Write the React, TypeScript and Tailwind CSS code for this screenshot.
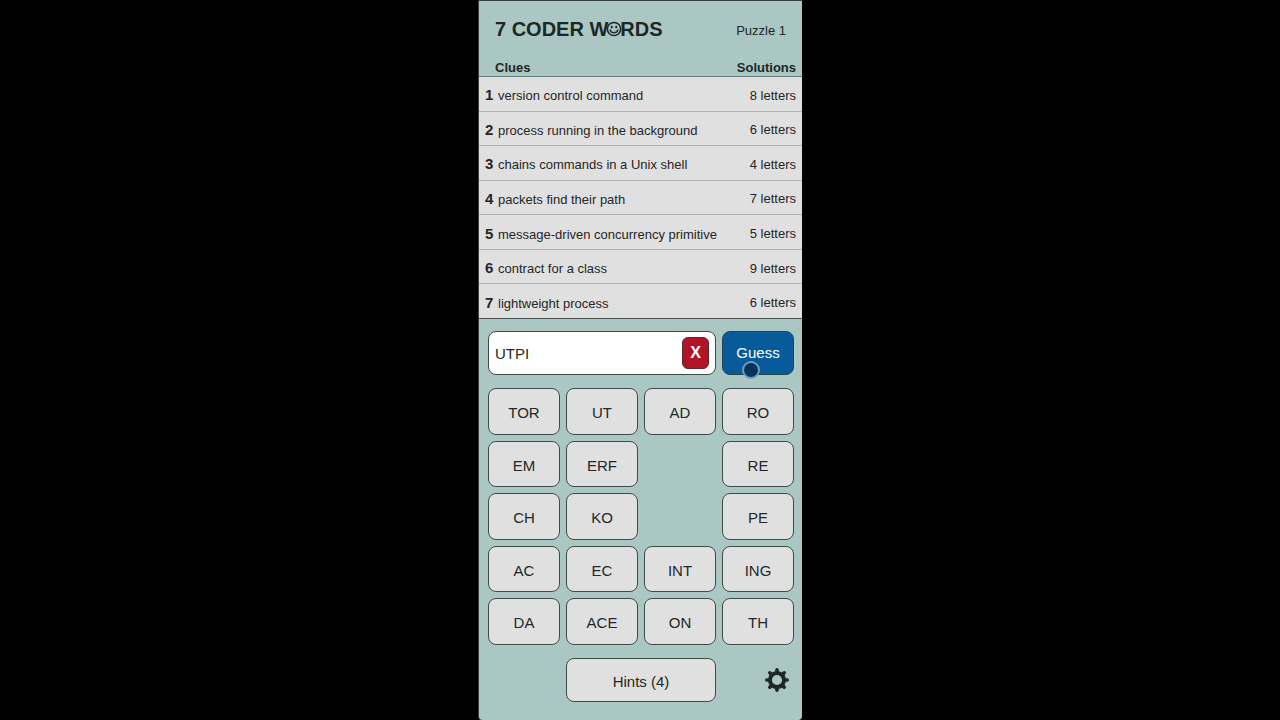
import { useState } from "react";

const clues = [
  { text: "version control command", length: 8 },
  { text: "process running in the background", length: 6 },
  { text: "chains commands in a Unix shell", length: 4 },
  { text: "packets find their path", length: 7 },
  { text: "message-driven concurrency primitive", length: 5 },
  { text: "contract for a class", length: 9 },
  { text: "lightweight process", length: 6 },
];

// null is a tile that has already been played
const tiles = [
  "TOR", "UT", "AD", "RO",
  "EM", "ERF", null, "RE",
  "CH", "KO", null, "PE",
  "AC", "EC", "INT", "ING",
  "DA", "ACE", "ON", "TH",
];

const keyStyle = "rounded-lg border border-[#3f4b49] bg-[#e0e0e0] pt-1 text-[15px] text-[#222827]";

function Smiley() {
  return (
    <svg viewBox="0 0 30 30" className="-mx-0.5 h-4 w-4" aria-hidden="true">
      <circle cx="15" cy="15" r="12.4" fill="none" stroke="#1c2826" strokeWidth="2.8" />
      <ellipse cx="10.8" cy="11.4" rx="2" ry="2.6" fill="#1c2826" />
      <ellipse cx="19.2" cy="11.4" rx="2" ry="2.6" fill="#1c2826" />
      <path d="M7.8 16.6c1.4 7 13 7 14.4 0" fill="none" stroke="#1c2826" strokeWidth="2.6" strokeLinecap="round" />
    </svg>
  );
}

function Gear() {
  return (
    <svg viewBox="0 0 24 24" className="h-6 w-6" aria-hidden="true">
      {[0, 45, 90, 135].map((angle) => (
        <path
          key={angle}
          d="M12 1.8V4.4M12 19.6V22.2"
          stroke="#1c2826"
          strokeWidth="3.6"
          strokeLinecap="round"
          transform={`rotate(${angle} 12 12)`}
        />
      ))}
      <circle cx="12" cy="12" r="7.1" fill="none" stroke="#1c2826" strokeWidth="4" />
    </svg>
  );
}

export default function App() {
  const [guess, setGuess] = useState("UTPI");

  return (
    <div className="min-h-screen bg-black font-['Liberation_Sans',Arial,sans-serif] text-[#1c2826]">
      <main className="mx-auto min-h-screen w-full max-w-[324px] rounded-b-sm border-t border-l border-[#38403f] bg-[#abc7c3]">
        <header className="flex items-center justify-between pt-4 pr-4 pl-4">
          <h1 className="flex items-center text-xl leading-6 font-bold">
            <span>7 CODER W</span>
            <Smiley />
            <span>RDS</span>
          </h1>
          <span className="pt-1 text-[13px] leading-5">Puzzle 1</span>
        </header>

        <table className="mt-[17px] h-[261px] w-full border-b border-[#4b5654] text-[13px] leading-4">
          <thead>
            <tr className="h-[18px] border-b border-[#65807c]">
              <th className="pt-0.5 pl-4 text-left">Clues</th>
              <th className="pt-0.5 pr-1.5 text-right">Solutions</th>
            </tr>
          </thead>
          <tbody className="bg-[#e0e0e0] text-[#262626]">
            {clues.map((clue, i) => (
              <tr key={clue.text} className="border-b border-[#b0b0b0] last:border-b-0">
                <td className="pt-1 pl-1.5">
                  <span className="inline-block w-[13px] text-[15px] leading-4 font-bold">{i + 1}</span>
                  {clue.text}
                </td>
                <td className="pt-1 pr-1.5 text-right">{clue.length} letters</td>
              </tr>
            ))}
          </tbody>
        </table>

        <div className="pt-3 pr-2 pb-4 pl-[9px]">
          <form className="grid grid-cols-4 gap-1.5" onSubmit={(e) => e.preventDefault()}>
            <div className="col-span-3 flex h-11 items-center rounded-lg border border-[#3f4b49] bg-white pr-1.5 pl-1.5">
              <input
                aria-label="Your guess"
                className="min-w-0 flex-1 bg-transparent pt-0.5 text-[15px] text-[#222827] outline-none"
                value={guess}
                onChange={(e) => setGuess(e.target.value)}
              />
              <button
                type="button"
                aria-label="Clear guess"
                className="h-8 w-[27px] rounded-md border border-[#5d2630] bg-[#b01425] text-base leading-none font-bold text-white"
                onClick={() => setGuess("")}
              >
                X
              </button>
            </div>
            <div className="relative">
              <button className="h-11 w-full rounded-lg border border-[#24464f] bg-[#075b9a] text-[15px] text-white">
                Guess
              </button>
              <span className="pointer-events-none absolute bottom-[-4px] left-5 size-[18px] rounded-full border-2 border-[#6f9dbb] bg-[#083459]" />
            </div>
          </form>

          <div className="mt-[13px] grid h-[257px] grid-cols-4 grid-rows-5 gap-1.5">
            {tiles.map((tile, i) =>
              tile ? (
                <button key={i} className={keyStyle} onClick={() => setGuess(guess + tile)}>
                  {tile}
                </button>
              ) : (
                <span key={i} />
              ),
            )}
          </div>

          <footer className="mt-[13px] grid grid-cols-4 items-center gap-1.5">
            <button className={`${keyStyle} col-span-2 col-start-2 h-11`}>Hints (4)</button>
            <button aria-label="Settings" className="mr-[5px] justify-self-end">
              <Gear />
            </button>
          </footer>
        </div>
      </main>
    </div>
  );
}
